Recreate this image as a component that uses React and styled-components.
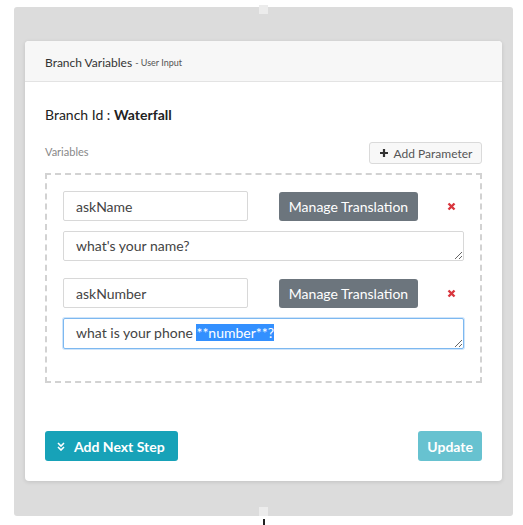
import React, { useEffect, useRef } from 'react'
import styled, { createGlobalStyle } from 'styled-components'

const GlobalStyle = createGlobalStyle`
  body {
    margin: 0;
    background: #fff;
    font-family: Lato, "Open Sans", sans-serif;
  }
  textarea::selection {
    background: #3390ff;
    color: #fff;
  }
`

const Stage = styled.div`
  padding: 7px 10px 0 14px;
`

const Canvas = styled.div`
  position: relative;
  width: 499px;
  height: 509px;
  background: #dcdcdc;
  border-radius: 3px;
  padding: 34px 0 0 11px;
  box-sizing: border-box;
`

const Handle = styled.div`
  position: absolute;
  left: 245px;
  top: ${props => (props.bottom ? '500px' : '-2px')};
  width: 9px;
  height: 9px;
  background: #ececec;
`

const Stem = styled.div`
  margin: 3px 0 0 249px;
  width: 2px;
  height: 8px;
  background: #222;
`

const Card = styled.div`
  width: 477px;
  height: 440px;
  background: #fff;
  border-radius: 4px;
  box-shadow: 0 1px 4px rgba(0, 0, 0, 0.12);
  display: flex;
  flex-direction: column;
  overflow: hidden;
`

const Header = styled.div`
  height: 41px;
  background: #f7f7f7;
  border-bottom: 1px solid #e3e3e3;
  display: flex;
  align-items: center;
  padding: 2px 20px 0;
  box-sizing: border-box;
  font-size: 12px;
  color: #333;
`

const Sub = styled.span`
  font-size: 9px;
  color: #555;
  margin-left: 3px;
`

const Body = styled.div`
  flex: 1;
  padding: 0 20px 20px;
  display: flex;
  flex-direction: column;
`

const BranchId = styled.div`
  margin-top: 24px;
  font-size: 14px;
  color: #222;

  b {
    font-weight: 700;
  }
`

const VarRow = styled.div`
  margin-top: 19px;
  display: flex;
  justify-content: space-between;
  align-items: center;
`

const Label = styled.div`
  font-size: 11px;
  color: #888;
  margin-top: -3px;
`

const LightButton = styled.button`
  height: 22px;
  width: 113px;
  background: #f8f8f8;
  border: 1px solid #dadada;
  border-radius: 3px;
  font-family: inherit;
  font-size: 12px;
  color: #555;
  display: flex;
  align-items: center;
  justify-content: center;
  gap: 5px;
  padding: 0;
`

const Box = styled.div`
  margin-top: 9px;
  height: 210px;
  box-sizing: border-box;
  border: 2px dashed #d2d2d2;
  padding: 16px 16px 0;
  display: flex;
  flex-direction: column;
`

const Item = styled.div`
  display: flex;
  flex-direction: column;
  gap: 10px;
  margin-bottom: 17px;
`

const Line = styled.div`
  display: flex;
  align-items: center;
`

const TextInput = styled.input`
  width: 185px;
  height: 30px;
  box-sizing: border-box;
  border: 1px solid #d8d8d8;
  border-radius: 2px;
  padding: 0 12px;
  font-family: inherit;
  font-size: 14px;
  color: #444;
  outline: none;
`

const DarkButton = styled.button`
  margin-left: 31px;
  width: 139px;
  height: 29px;
  background: #6c757d;
  color: #fff;
  border: none;
  border-radius: 3px;
  font-family: inherit;
  font-size: 14px;
  padding: 0;
`

const Remove = styled.span`
  margin-left: 29px;
  color: #d9363e;
  display: flex;
`

const Area = styled.textarea`
  width: 401px;
  height: ${props => (props.$active ? '31px' : '30px')};
  box-sizing: border-box;
  border: 1px solid ${props => (props.$active ? '#7db8f0' : '#d8d8d8')};
  box-shadow: ${props => (props.$active ? '0 0 0 1px rgba(120, 180, 240, 0.35)' : 'none')};
  border-radius: 2px;
  padding: 5px 12px;
  font-family: inherit;
  font-size: 14px;
  color: #444;
  resize: vertical;
  outline: none;
  overflow: hidden;
  display: block;
`

const Footer = styled.div`
  margin-top: auto;
  display: flex;
  justify-content: space-between;
`

const InfoButton = styled.button`
  height: 30px;
  padding: 0 ${props => (props.$wide ? '13px 0 12px' : '9px')};
  background: #17a2b8;
  opacity: ${props => (props.disabled ? 0.65 : 1)};
  color: #fff;
  border: none;
  border-radius: 3px;
  font-family: inherit;
  font-size: 14px;
  font-weight: 700;
  display: flex;
  align-items: center;
  gap: 9px;
`

const Plus = () => (
  <svg width="10" height="10" viewBox="0 0 10 10">
    <path d="M5 1v8M1 5h8" stroke="#333" strokeWidth="2.2" />
  </svg>
)

const Cross = () => (
  <svg width="9" height="9" viewBox="0 0 9 9">
    <path d="M1.5 1.5l6 6M7.5 1.5l-6 6" stroke="currentColor" strokeWidth="2.4" />
  </svg>
)

const Chevrons = () => (
  <svg width="8" height="9" viewBox="0 0 8 9">
    <path d="M1 1l3 3 3-3M1 5l3 3 3-3" fill="none" stroke="#fff" strokeWidth="1.6" />
  </svg>
)

const variables = [
  { name: 'askName', text: "what's your name?" },
  { name: 'askNumber', text: 'what is your phone **number**?', active: true },
]

const App = () => {
  const ref = useRef(null)

  useEffect(() => {
    const el = ref.current
    if (el) {
      el.focus()
      el.setSelectionRange(19, 30)
    }
  }, [])

  return (
    <Stage>
      <GlobalStyle />
      <Canvas>
        <Handle />
        <Card>
          <Header>
            Branch Variables <Sub>- User Input</Sub>
          </Header>
          <Body>
            <BranchId>
              Branch Id : <b>Waterfall</b>
            </BranchId>
            <VarRow>
              <Label>Variables</Label>
              <LightButton>
                <Plus /> Add Parameter
              </LightButton>
            </VarRow>
            <Box>
              {variables.map(v => (
                <Item key={v.name}>
                  <Line>
                    <TextInput defaultValue={v.name} />
                    <DarkButton>Manage Translation</DarkButton>
                    <Remove>
                      <Cross />
                    </Remove>
                  </Line>
                  <Area
                    rows={1}
                    defaultValue={v.text}
                    $active={v.active}
                    ref={v.active ? ref : undefined}
                  />
                </Item>
              ))}
            </Box>
            <Footer>
              <InfoButton $wide>
                <Chevrons /> Add Next Step
              </InfoButton>
              <InfoButton disabled>Update</InfoButton>
            </Footer>
          </Body>
        </Card>
        <Handle bottom />
      </Canvas>
      <Stem />
    </Stage>
  )
}

export default App
